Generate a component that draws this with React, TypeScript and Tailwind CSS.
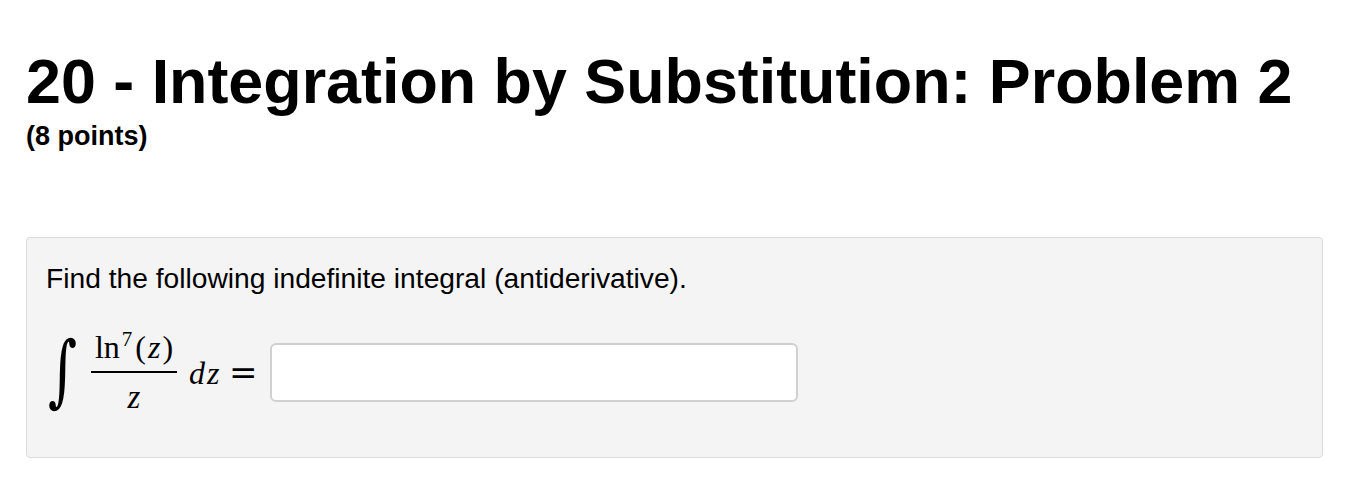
const sans = "font-['Liberation_Sans',Arial,sans-serif]";
const serif = "font-['Liberation_Serif','Times_New_Roman',serif]";

const ProblemHeader = () => {
    return (
        <div>
            <h1 className="text-[62.8px] font-bold leading-none text-black">
                20 - Integration by Substitution: Problem 2
            </h1>
            <p className="mt-[10px] text-[27px] font-bold leading-none text-black">
                (8 points)
            </p>
        </div>
    );
};

const IntegralExpression = () => {
    return (
        <div className={`flex items-center text-black ${serif}`}>
            {/* integral sign */}
            <span className="inline-block w-[40px] origin-center -translate-y-[2px] scale-y-[1.4] pl-[2px] font-['DejaVu_Serif',serif] text-[56px] leading-none">
                ∫
            </span>
            {/* fraction */}
            <span className="ml-[5px] inline-flex w-[86px] flex-col items-center">
                <span className="flex items-baseline text-[32px] leading-none">
                    <span>ln</span>
                    <span className="relative -top-[12px] ml-[2px] mr-[3px] text-[21px]">7</span>
                    <span>(</span>
                    <span className="px-[2px] italic">z</span>
                    <span>)</span>
                </span>
                <span className="mt-[8px] h-[2px] w-[86px] bg-black" />
                <span className="mt-[8px] text-[33px] italic leading-none">z</span>
            </span>
            <span className="ml-[12px] mt-[2px] w-[33px] text-[32px] italic leading-none tracking-[2px]">dz</span>
            <span className="ml-[7px] w-[25px] font-['DejaVu_Serif',serif] text-[34px] leading-none">=</span>
            <input
                type="text"
                className="ml-[16px] h-[59px] w-[528px] rounded-[6px] border-2 border-[#d0d0d0] bg-white px-3 text-[24px] outline-none"
            />
        </div>
    );
};

export default function App() {
    return (
        <div className={`min-h-screen bg-white px-[26px] pt-[50px] ${sans}`}>
            <ProblemHeader />
            <div className="mt-[87px] w-[1297px] rounded-[4px] border border-[#dcdcdc] bg-[#f4f4f4] pb-[45px] pl-[19px] pt-[26px]">
                <p className="text-[28.2px] leading-none text-black">
                    Find the following indefinite integral (antiderivative).
                </p>
                <div className="mt-[40px] flex h-[80px] items-center">
                    <IntegralExpression />
                </div>
            </div>
        </div>
    );
}
